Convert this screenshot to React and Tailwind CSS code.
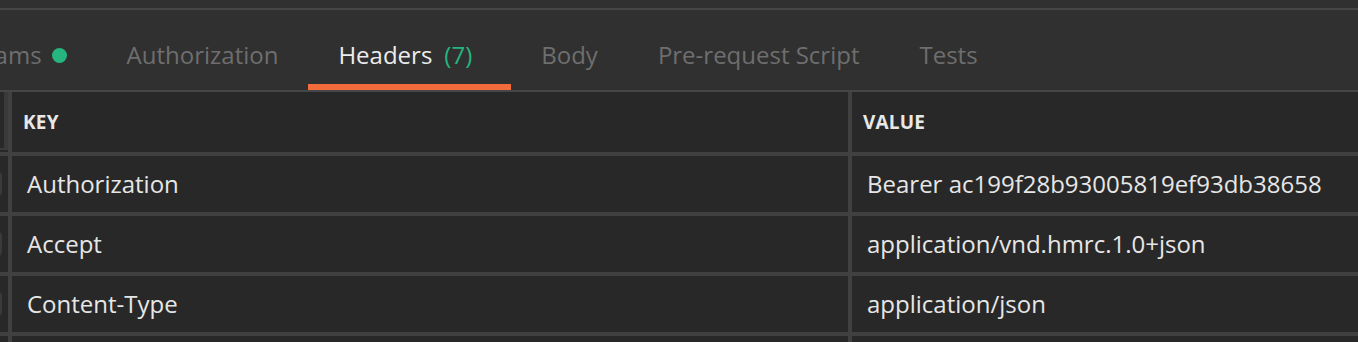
import React from "react";

const rows = [
  ["Authorization", "Bearer ac199f28b93005819ef93db38658"],
  ["Accept", "application/vnd.hmrc.1.0+json"],
  ["Content-Type", "application/json"],
  ["", ""],
];

function Tab({ label, active, children }) {
  return (
    <div className="relative flex items-center px-[30px] pt-[10px] shrink-0">
      <span className={active ? "text-[#ececec]" : "text-[#6e6e6e]"}>{label}</span>
      {children}
      {active && <div className="absolute left-0 right-0 bottom-0 h-[6px] bg-[#f26b3a]" />}
    </div>
  );
}

export default function App() {
  return (
    <div className="w-[1358px] h-[342px] overflow-hidden bg-[#282828] font-['Open_Sans',sans-serif]">
      <div className="h-[8px] bg-[#303030]" />
      <div className="h-[2px] bg-[#464646]" />
      <div className="h-[80px] bg-[#303030] flex items-stretch ml-[-73px] text-[24px] whitespace-nowrap">
        <Tab label="Params">
          <span className="ml-[10px] w-[15px] h-[15px] rounded-full bg-[#26b47f] inline-block" />
        </Tab>
        <Tab label="Authorization" />
        <Tab label="Headers" active>
          <span className="ml-[12px] mr-[9px] text-[#26b47f]">(7)</span>
        </Tab>
        <Tab label="Body" />
        <Tab label="Pre-request Script" />
        <Tab label="Tests" />
      </div>
      <div className="h-[2px] bg-[#464646]" />
      <div className="grid grid-cols-[8px_836px_506px] grid-rows-[60px_56px_56px_56px_56px] gap-[4px] bg-[#404040]">
        <div className="bg-[#282828]">
          <div className="w-[8px] h-[58px] border-r-[4px] border-b-[2px] border-[#3a3a3a]" />
        </div>
        <div className="bg-[#282828] flex items-center pl-[11px] text-[19px] font-bold text-[#e8e8e8] tracking-[0.2px]">KEY</div>
        <div className="bg-[#282828] flex items-center pl-[11px] text-[19px] font-bold text-[#e8e8e8] tracking-[0.2px]">VALUE</div>
        {rows.map(([k, v], i) => (
          <React.Fragment key={i}>
            <div className="bg-[#282828] flex items-center overflow-hidden">
              <div className="shrink-0 ml-[-20px] w-[22px] h-[24px] rounded-[4px] border-2 border-[#3a3a3a]" />
            </div>
            <div className="bg-[#282828] flex items-center pl-[15px] text-[24px] text-[#e6e6e6]">{k}</div>
            <div className="bg-[#282828] flex items-center pl-[15px] text-[24px] text-[#e6e6e6]">{v}</div>
          </React.Fragment>
        ))}
      </div>
    </div>
  );
}
